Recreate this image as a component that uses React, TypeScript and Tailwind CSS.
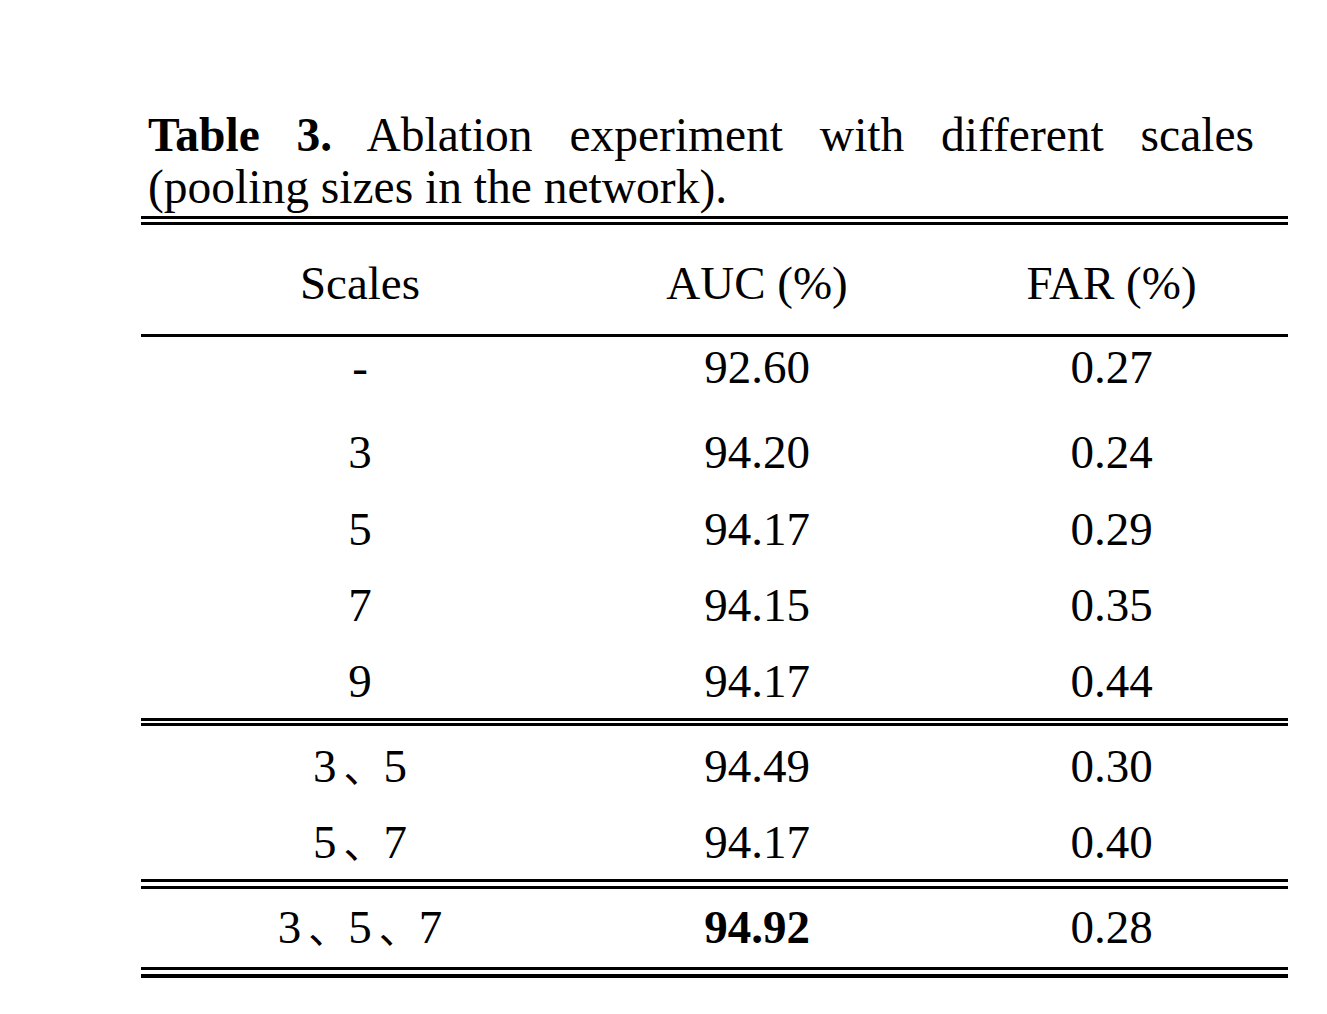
import React from "react";

const FONT = "font-['Liberation_Serif','Noto_Sans_CJK_SC',serif]";
const COLS = "grid grid-cols-[438px_356px_353px] text-center leading-[47px]";

function Scale({ parts }: { parts: string[] }) {
  return (
    <div>
      {parts.map((p, i) => (
        <React.Fragment key={i}>
          {i > 0 && <span className="inline-block w-[47px] pl-[7px] text-[40px] leading-[47px] text-left">、</span>}
          {p}
        </React.Fragment>
      ))}
    </div>
  );
}

function Row({ h, a, b, c, bold }: { h: string; a: string[]; b: string; c: string; bold?: boolean }) {
  return (
    <div className={`${COLS} ${h}`}>
      <Scale parts={a} />
      <div className={bold ? "font-bold" : ""}>{b}</div>
      <div>{c}</div>
    </div>
  );
}

export default function App() {
  return (
    <div className={`min-h-[1014px] w-[1327px] bg-white text-black ${FONT} text-[47px] pt-[109px]`}>
      <div className="ml-[148px] w-[1106px] text-[47.5px] leading-[52px] text-justify">
        <span className="font-bold">Table 3.</span> Ablation experiment with different scales (pooling sizes in the network).
      </div>
      <div className="ml-[141px] mt-[3px] w-[1147px]">
        <div className="h-[3px] bg-black" />
        <div className="h-[3px]" />
        <div className="h-[3px] bg-black" />
        <div className={`${COLS} h-[109px] pt-[35px]`}>
          <div>Scales</div>
          <div>AUC (%)</div>
          <div>FAR (%)</div>
        </div>
        <div className="h-[3px] bg-black" />
        <div className="pt-[7px]">
          <Row h="h-[85px]" a={["-"]} b="92.60" c="0.27" />
          <Row h="h-[77px]" a={["3"]} b="94.20" c="0.24" />
          <Row h="h-[76px]" a={["5"]} b="94.17" c="0.29" />
          <Row h="h-[76px]" a={["7"]} b="94.15" c="0.35" />
          <Row h="h-[60px]" a={["9"]} b="94.17" c="0.44" />
        </div>
        <div className="h-[3px] bg-black" />
        <div className="h-[2px]" />
        <div className="h-[3px] bg-black" />
        <div className="pt-[17px]">
          <Row h="h-[76px]" a={["3", "5"]} b="94.49" c="0.30" />
          <Row h="h-[60px]" a={["5", "7"]} b="94.17" c="0.40" />
        </div>
        <div className="h-[3px] bg-black" />
        <div className="h-[4px]" />
        <div className="h-[3px] bg-black" />
        <div className="pt-[15px]">
          <Row h="h-[63px]" a={["3", "5", "7"]} b="94.92" c="0.28" bold />
        </div>
        <div className="h-[3px] bg-black" />
        <div className="h-[4px]" />
        <div className="h-[4px] bg-black" />
      </div>
    </div>
  );
}
